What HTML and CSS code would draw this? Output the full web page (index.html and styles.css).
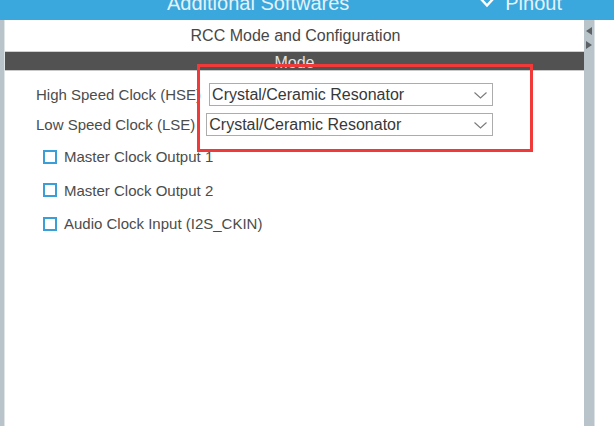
FILE: index.html
```html
<!DOCTYPE html>
<html>
<head>
<meta charset="utf-8">
<link rel="stylesheet" href="styles.css">
</head>
<body>
<div class="app">
  <div class="topbar">
    <span class="tab-title">Additional Softwares</span>
    <span class="pinout">
      <svg class="chev" width="16" height="12" viewBox="0 0 16 12"><path d="M1.5 0.5 L8 7.5 L14.5 0.5" fill="none" stroke="#ffffff" stroke-width="2.4"/></svg>
      <span>Pinout</span>
    </span>
  </div>
  <div class="main">
    <div class="gutter"></div>
    <div class="panel">
      <div class="panel-title">RCC Mode and Configuration</div>
      <div class="section-bar">Mode</div>
      <div class="form">
        <div class="field-row">
          <span class="field-label">High Speed Clock (HSE)</span>
          <div class="combo"><span>Crystal/Ceramic Resonator</span><svg width="13" height="7" viewBox="0 0 13 7"><path d="M0.5 0.5 L6.5 6 L12.5 0.5" fill="none" stroke="#7a7a7a" stroke-width="1.1"/></svg></div>
        </div>
        <div class="field-row lse">
          <span class="field-label">Low Speed Clock (LSE)</span>
          <div class="combo"><span>Crystal/Ceramic Resonator</span><svg width="13" height="7" viewBox="0 0 13 7"><path d="M0.5 0.5 L6.5 6 L12.5 0.5" fill="none" stroke="#7a7a7a" stroke-width="1.1"/></svg></div>
        </div>
        <div class="checks">
          <div class="check-row"><span class="box"></span><span class="check-label">Master Clock Output 1</span></div>
          <div class="check-row"><span class="box"></span><span class="check-label">Master Clock Output 2</span></div>
          <div class="check-row"><span class="box"></span><span class="check-label">Audio Clock Input (I2S_CKIN)</span></div>
        </div>
      </div>
    </div>
    <div class="scrollbar">
      <span class="arrow-left"></span>
      <span class="arrow-right"></span>
    </div>
    <div class="outer-right"></div>
  </div>
  <div class="highlight"></div>
</div>
</body>
</html>
```
FILE: styles.css
```css
html, body {
  margin: 0;
  padding: 0;
  background: #ffffff;
}
body {
  width: 614px;
  height: 426px;
  overflow: hidden;
  font-family: "Liberation Sans", Arial, sans-serif;
}
.app {
  position: relative;
  width: 614px;
  height: 426px;
  display: flex;
  flex-direction: column;
}
.topbar {
  height: 20px;
  flex: 0 0 20px;
  background: #3aa8dc;
  overflow: hidden;
  display: flex;
  align-items: flex-start;
  color: #e4f2fa;
  font-size: 20px;
  line-height: 20px;
}
.tab-title {
  margin-top: -7px;
  margin-left: 167px;
}
.pinout {
  margin-left: auto;
  margin-right: 52px;
  display: flex;
  align-items: flex-start;
  gap: 10px;
}
.pinout span {
  margin-top: -7px;
}
.chev {
  margin-top: -2px;
}
.main {
  flex: 1;
  display: flex;
  min-height: 0;
}
.gutter {
  width: 4px;
  background: #b9c4ca;
}
.panel {
  width: 579px;
  border-left: 1px solid #dfe4e7;
  display: flex;
  flex-direction: column;
}
.panel-title {
  height: 31px;
  line-height: 31px;
  text-align: center;
  font-size: 16px;
  color: #474747;
  border-bottom: 1px solid #cfcfcf;
  padding-left: 2px;
}
.section-bar {
  height: 18px;
  line-height: 21px;
  background: #525252;
  color: #e2e2e2;
  text-align: center;
  font-size: 16px;
  border-bottom: 1px solid #c9c9c9;
  overflow: hidden;
}
.form {
  padding-left: 31px;
  padding-top: 12px;
  display: flex;
  flex-direction: column;
}
.field-row {
  display: flex;
  align-items: center;
  width: 457px;
  gap: 8px;
}
.field-row.lse {
  margin-top: 7px;
  gap: 11px;
}
.field-label {
  font-size: 15px;
  color: #4c4c4c;
  white-space: nowrap;
}
.combo {
  flex: 1;
  height: 23px;
  box-sizing: border-box;
  border: 1px solid #acacac;
  display: flex;
  align-items: center;
  justify-content: space-between;
  padding-left: 2px;
  padding-right: 5px;
  font-size: 16px;
  color: #383838;
  background: #ffffff;
}
.combo svg {
  margin-top: 1px;
}
.checks {
  margin-top: 4px;
  padding-left: 7px;
  display: flex;
  flex-direction: column;
}
.check-row {
  height: 33.5px;
  display: flex;
  align-items: center;
  gap: 7px;
}
.box {
  width: 14px;
  height: 14px;
  box-sizing: border-box;
  border: 2px solid #3a9fd8;
  background: #ffffff;
}
.check-label {
  font-size: 15px;
  color: #4c4c4c;
}
.scrollbar {
  width: 10px;
  background: #b9c4ca;
  display: flex;
  flex-direction: column;
  align-items: center;
  padding-top: 7px;
  gap: 6px;
  border-right: 1px solid #dbe1e4;
}
.arrow-left {
  width: 0;
  height: 0;
  border-top: 4.5px solid transparent;
  border-bottom: 4.5px solid transparent;
  border-right: 6px solid #5b6165;
}
.arrow-right {
  width: 0;
  height: 0;
  border-top: 4.5px solid transparent;
  border-bottom: 4.5px solid transparent;
  border-left: 6px solid #5b6165;
}
.outer-right {
  flex: 1;
  background: #ffffff;
}
.highlight {
  position: absolute;
  left: 197px;
  top: 64px;
  width: 336px;
  height: 88px;
  box-sizing: border-box;
  border: 3px solid #f03a3a;
  pointer-events: none;
}
```
